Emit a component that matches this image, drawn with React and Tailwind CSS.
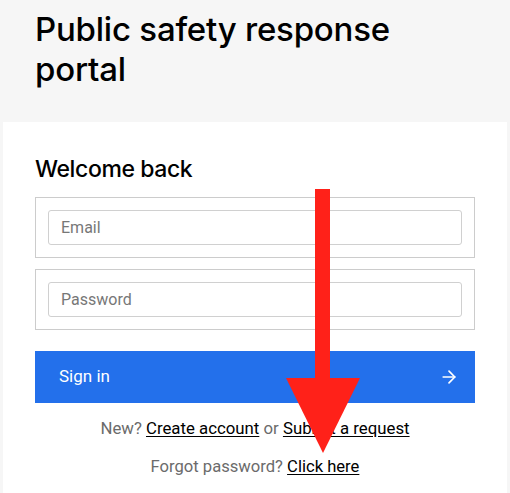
import { ArrowRight } from 'lucide-react'

export default function App() {
  return (
    <div className="relative w-[510px] h-[493px] overflow-hidden bg-[#f6f6f6] font-['Inter',sans-serif] text-black">
      <header className="px-[35px] pt-[9px] h-[122px]">
        <h1 className="text-[33px] leading-[40px] font-medium tracking-[-0.22px]">
          Public safety response portal
        </h1>
      </header>

      <main className="mx-[3px] bg-white px-[32px] pt-[32px] pb-[20px]">
        <h2 className="text-[23px] leading-[30px] font-medium tracking-[-0.4px] mb-[13px]">
          Welcome back
        </h2>

        <div className="flex flex-col gap-[11px]">
          <div className="border border-[#cccccc] p-[12px]">
            <input
              type="email"
              placeholder="Email"
              className="w-full h-[35px] px-[12px] border border-[#d0d0d0] rounded-[3px] text-[16px] font-['Roboto',sans-serif] placeholder:text-[#777777] outline-none"
            />
          </div>
          <div className="border border-[#cccccc] p-[12px]">
            <input
              type="password"
              placeholder="Password"
              className="w-full h-[35px] px-[12px] border border-[#d0d0d0] rounded-[3px] text-[16px] font-['Roboto',sans-serif] placeholder:text-[#777777] outline-none"
            />
          </div>
        </div>

        <button
          type="submit"
          className="mt-[21px] w-full h-[52px] flex items-center justify-between pl-[24px] pr-[16px] bg-[#2370eb] text-white text-[17px] font-['Roboto',sans-serif]"
        >
          <span>Sign in</span>
          <ArrowRight size={20} strokeWidth={2} />
        </button>

        <p className="mt-[14px] text-center text-[16.8px] leading-[22px] text-[#6b6b6b] font-['Roboto',sans-serif]">
          New?{' '}
          <a href="#" className="text-black underline underline-offset-2">Create account</a>
          {' '}or{' '}
          <a href="#" className="text-black underline underline-offset-2">Submit a request</a>
        </p>
        <p className="mt-[17px] text-center text-[16.6px] leading-[22px] text-[#6b6b6b] font-['Roboto',sans-serif]">
          Forgot password?{' '}
          <a href="#" className="text-black underline underline-offset-2">Click here</a>
        </p>
      </main>

      <svg
        className="absolute left-0 top-0 pointer-events-none"
        width="510"
        height="493"
        viewBox="0 0 510 493"
      >
        <rect x="315" y="189" width="15" height="190" fill="#ff2119" />
        <polygon points="286,378 360,378 323,453" fill="#ff2119" />
      </svg>
    </div>
  )
}
